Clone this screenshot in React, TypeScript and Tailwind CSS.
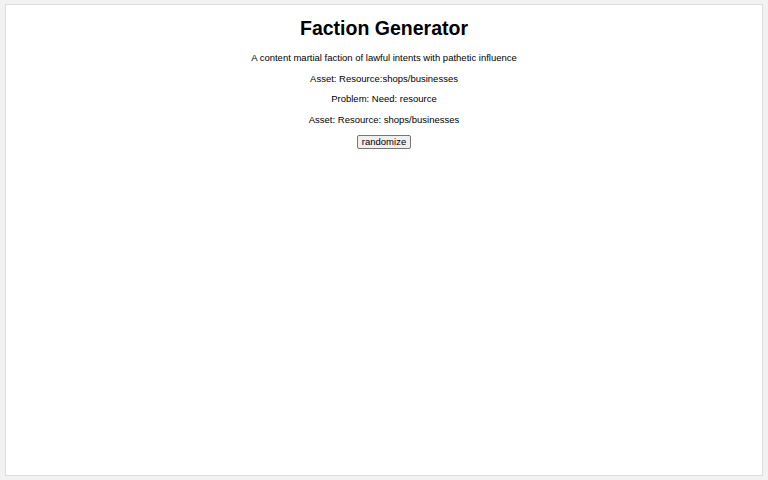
const lines = [
  "A content martial faction of lawful intents with pathetic influence",
  "Asset: Resource:shops/businesses",
  "Problem: Need: resource",
  "Asset: Resource: shops/businesses",
];

export default function App() {
  return (
    <div className="h-[480px] w-[768px] bg-[#f2f2f2] px-[5px] py-[4px] font-['Liberation_Sans',Arial,sans-serif] text-black">
      <div className="flex h-full flex-col items-center border border-[#dcdcdc] bg-white pt-[9px]">
        <h1 className="text-[19.5px] font-bold leading-[28px]">Faction Generator</h1>
        <div className="mt-[10px] flex flex-col items-center gap-[8px] text-[9.5px] leading-[12.5px]">
          {lines.map((line, i) => (
            <p key={i}>{line}</p>
          ))}
        </div>
        <button className="mt-[9px] rounded-[2px] border border-[#767676] bg-[#efefef] px-[4px] text-[9.5px] leading-[12px]">
          randomize
        </button>
      </div>
    </div>
  );
}
